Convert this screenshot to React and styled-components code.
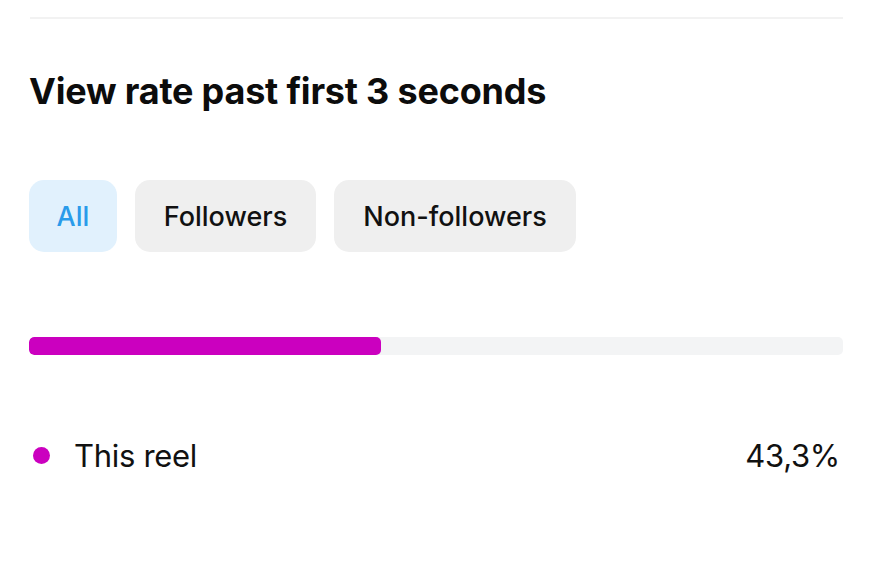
import React from 'react';
import styled, { createGlobalStyle } from 'styled-components';

// ==============================================

const RATE = 43.3;
const TABS = ['All', 'Followers', 'Non-followers'];

// ==============================================

const Global = createGlobalStyle`
  html, body {
    margin: 0;
    padding: 0;
    background: #ffffff;
  }
  body {
    font-family: Inter, 'Noto Sans', sans-serif;
    color: #111111;
  }
`;

const Page = styled.div`
  display: flex;
  flex-direction: column;
  width: 874px;
  height: 561px;
  padding: 17px 31px 0 29px;
  box-sizing: border-box;
`;

const Divider = styled.div`
  height: 2px;
  background: #f2f2f2;
  margin-left: 1px;
`;

const Title = styled.h2`
  margin: 52px 0 0 0;
  font-size: 36px;
  font-weight: 700;
  line-height: 40px;
  letter-spacing: -0.2px;
  color: #0c0c0c;
`;

const Tabs = styled.div`
  display: flex;
  gap: 18px;
  margin-top: 69px;
`;

const Tab = styled.button`
  height: 72px;
  padding: 0 ${(p) => (p.$active ? 27.5 : 29)}px;
  border: none;
  border-radius: 15px;
  font-family: Inter, 'Noto Sans', sans-serif;
  font-size: 27px;
  font-weight: 500;
  background: ${(p) => (p.$active ? '#e1f1fd' : '#efefef')};
  color: ${(p) => (p.$active ? '#2a9bea' : '#111111')};
  cursor: pointer;
`;

const Track = styled.div`
  height: 18px;
  margin-top: 85px;
  border-radius: 5px;
  background: #f3f4f5;
  overflow: hidden;
`;

const Fill = styled.div`
  height: 100%;
  border-radius: 5px;
  background: #cb00bf;
`;

const Legend = styled.div`
  display: flex;
  align-items: center;
  margin-top: 82px;
  padding-right: 3px;
  font-size: 31px;
  font-weight: 400;
  color: #111111;
`;

const Dot = styled.span`
  width: 17px;
  height: 17px;
  border-radius: 50%;
  background: #cb00bf;
  margin: 0 24px 0 4px;
`;

const Label = styled.span`
  flex: 1;
  letter-spacing: -0.3px;
`;

const Value = styled.span`
  letter-spacing: -0.3px;
`;

// ==============================================

export default function App() {
  const [active, setActive] = React.useState(0);

  return (
    <>
      <Global />
      <Page>
        <Divider />
        <Title>View rate past first 3 seconds</Title>
        <Tabs>
          {TABS.map((t, i) => (
            <Tab key={t} $active={i === active} onClick={() => setActive(i)}>
              {t}
            </Tab>
          ))}
        </Tabs>
        <Track>
          <Fill style={{ width: `${RATE}%` }} />
        </Track>
        <Legend>
          <Dot />
          <Label>This reel</Label>
          <Value>{String(RATE).replace('.', ',')}%</Value>
        </Legend>
      </Page>
    </>
  );
}
